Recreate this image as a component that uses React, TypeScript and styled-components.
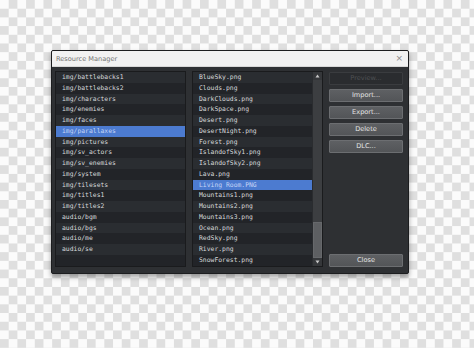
import React from "react"
import styled, { createGlobalStyle } from "styled-components"

const folders = [
  "img/battlebacks1",
  "img/battlebacks2",
  "img/characters",
  "img/enemies",
  "img/faces",
  "img/parallaxes",
  "img/pictures",
  "img/sv_actors",
  "img/sv_enemies",
  "img/system",
  "img/tilesets",
  "img/titles1",
  "img/titles2",
  "audio/bgm",
  "audio/bgs",
  "audio/me",
  "audio/se",
]

const files = [
  "BlueSky.png",
  "Clouds.png",
  "DarkClouds.png",
  "DarkSpace.png",
  "Desert.png",
  "DesertNight.png",
  "Forest.png",
  "IslandofSky1.png",
  "IslandofSky2.png",
  "Lava.png",
  "Living Room.PNG",
  "Mountains1.png",
  "Mountains2.png",
  "Mountains3.png",
  "Ocean.png",
  "RedSky.png",
  "River.png",
  "SnowForest.png",
]

const actions = ["Import...", "Export...", "Delete", "DLC..."]

const App: React.FC = () => {
  return (
    <>
      <GlobalStyle />
      <Page>
        <Window>
          <TitleBar>
            <Title>Resource Manager</Title>
            <CloseX>×</CloseX>
          </TitleBar>
          <Body>
            <ListBox>
              {folders.map((f, i) => (
                <Row key={f} $odd={i % 2 === 1} $selected={f === "img/parallaxes"}>
                  {f}
                </Row>
              ))}
            </ListBox>
            <FileBox>
              <FileList>
                {files.map((f, i) => (
                  <Row key={f} $odd={i % 2 === 1} $selected={f === "Living Room.PNG"}>
                    {f}
                  </Row>
                ))}
              </FileList>
              <ScrollBar>
                <Arrow>
                  <svg width="5" height="4" viewBox="0 0 5 4">
                    <path d="M2.5 0.5 L4.5 3.5 L0.5 3.5 Z" fill="#c8c8c8" />
                  </svg>
                </Arrow>
                <Track>
                  <Thumb />
                </Track>
                <Arrow>
                  <svg width="5" height="4" viewBox="0 0 5 4">
                    <path d="M0.5 0.5 L4.5 0.5 L2.5 3.5 Z" fill="#c8c8c8" />
                  </svg>
                </Arrow>
              </ScrollBar>
            </FileBox>
            <Actions>
              <Button disabled>Preview...</Button>
              {actions.map((a) => (
                <Button key={a}>{a}</Button>
              ))}
              <Spacer />
              <Button>Close</Button>
            </Actions>
          </Body>
        </Window>
      </Page>
    </>
  )
}

const GlobalStyle = createGlobalStyle`
  html, body {
    margin: 0;
    padding: 0;
  }
  body {
    width: 474px;
    height: 348px;
    overflow: hidden;
    background-color: #fbfbfb;
    background-image: repeating-conic-gradient(#dfdfdf 0% 25%, #fbfbfb 0% 50%);
    background-size: 17.4px 17.4px;
    font-family: "DejaVu Sans", sans-serif;
  }
`

const Page = styled.div`
  padding: 50px 0 0 51px;
`

const Window = styled.div`
  width: 358px;
  height: 224px;
  display: flex;
  flex-direction: column;
  background: #2e3033;
  border: 1px solid #1c1d1f;
  box-sizing: border-box;
  border-radius: 2px;
  box-shadow: 0 3px 5px rgba(0, 0, 0, 0.35);
  overflow: hidden;
`

const TitleBar = styled.div`
  height: 16px;
  flex: none;
  display: flex;
  align-items: center;
  justify-content: space-between;
  padding: 0 5px 0 4px;
  background: #f1f1f1;
  border-bottom: 1px solid #d8d8d8;
  box-sizing: border-box;
`

const Title = styled.span`
  font-size: 6.6px;
  color: #727272;
`

const CloseX = styled.span`
  font-size: 9px;
  line-height: 9px;
  color: #8a8a8a;
`

const Body = styled.div`
  flex: 1;
  display: flex;
  gap: 6px;
  padding: 4px 5px 6px 3px;
  min-height: 0;
`

const ListBox = styled.div`
  width: 131px;
  background: #222428;
  border: 1px solid #1a1b1d;
  box-sizing: border-box;
  overflow: hidden;
`

const FileBox = styled.div`
  width: 131px;
  display: flex;
  background: #222428;
  border: 1px solid #1a1b1d;
  box-sizing: border-box;
  overflow: hidden;
`

const FileList = styled.div`
  flex: 1;
  overflow: hidden;
`

const Row = styled.div<{ $odd: boolean; $selected: boolean }>`
  height: 10.75px;
  line-height: 10.75px;
  padding-left: 6px;
  font-family: "DejaVu Sans Mono", monospace;
  font-size: 6.4px;
  white-space: nowrap;
  color: ${(p) => (p.$selected ? "#c4d4f6" : "#d6d8da")};
  background: ${(p) => (p.$selected ? "#4c7bd0" : p.$odd ? "#222428" : "#2a2d31")};
`

const ScrollBar = styled.div`
  width: 9px;
  display: flex;
  flex-direction: column;
  background: #35373a;
  border-left: 1px solid #2a2c2f;
`

const Arrow = styled.div`
  height: 8px;
  flex: none;
  display: flex;
  align-items: center;
  justify-content: center;
`

const Track = styled.div`
  flex: 1;
  display: flex;
  flex-direction: column;
  justify-content: flex-end;
  background: #3c3e41;
`

const Thumb = styled.div`
  height: 36px;
  background: #5d5f62;
  border: 1px solid #66686b;
  box-sizing: border-box;
`

const Actions = styled.div`
  width: 74px;
  display: flex;
  flex-direction: column;
  gap: 4px;
  padding-top: 1px;
`

const Button = styled.button`
  height: 13px;
  padding: 0;
  margin: 0;
  font-family: "DejaVu Sans", sans-serif;
  font-size: 6.6px;
  line-height: 11px;
  color: #e4e4e4;
  background: linear-gradient(#5e6063, #535558);
  border: 1px solid #6c6e71;
  border-radius: 1px;
  box-sizing: border-box;

  &:disabled {
    color: #4f5154;
    background: #2a2c2f;
    border-color: #3a3c3f;
  }
`

const Spacer = styled.div`
  flex: 1;
`

export default App
